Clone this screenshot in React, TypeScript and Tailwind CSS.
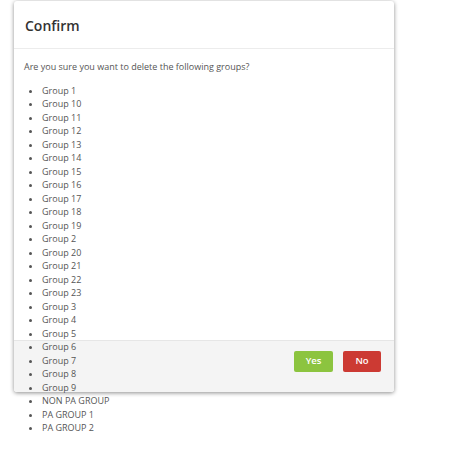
const groups = [
  'Group 1', 'Group 10', 'Group 11', 'Group 12', 'Group 13', 'Group 14', 'Group 15',
  'Group 16', 'Group 17', 'Group 18', 'Group 19', 'Group 2', 'Group 20', 'Group 21',
  'Group 22', 'Group 23', 'Group 3', 'Group 4', 'Group 5', 'Group 6', 'Group 7',
  'Group 8', 'Group 9', 'NON PA GROUP', 'PA GROUP 1', 'PA GROUP 2',
];

export default function App() {
  return (
    <div className="h-[463px] w-[474px] bg-white pl-[14px] pt-[1px] font-['Open_Sans',sans-serif]">
      {/* block layout on purpose: the list overflows onto the footer */}
      <div className="w-[380px] rounded-[3px] bg-white shadow-[0_1px_4px_rgba(0,0,0,0.45)]">
        <div className="flex h-[48px] items-center border-b border-[#ececec] px-[11px] pt-[2px]">
          <h1 className="text-[14px] font-semibold text-[#333]">Confirm</h1>
        </div>
        <div className="h-[291px] px-[10px] pt-[11px] text-[9px] leading-[13.5px] text-[#555]">
          <p className="mb-[10px]">Are you sure you want to delete the following groups?</p>
          <ul className="list-disc pl-[18px]">
            {groups.map((g) => (
              <li key={g}>{g}</li>
            ))}
          </ul>
        </div>
        <div className="flex h-[52px] items-start justify-end gap-[10px] rounded-b-[3px] border-t border-[#e6e6e6] bg-[#f4f4f4] pr-[13px] pt-[10px]">
          <button className="h-[21px] w-[39px] rounded-[2px] bg-[#8cc43f] text-[9.5px] font-semibold text-white">
            Yes
          </button>
          <button className="h-[21px] w-[38px] rounded-[2px] bg-[#cc3a33] text-[9.5px] font-semibold text-white">
            No
          </button>
        </div>
      </div>
    </div>
  );
}
